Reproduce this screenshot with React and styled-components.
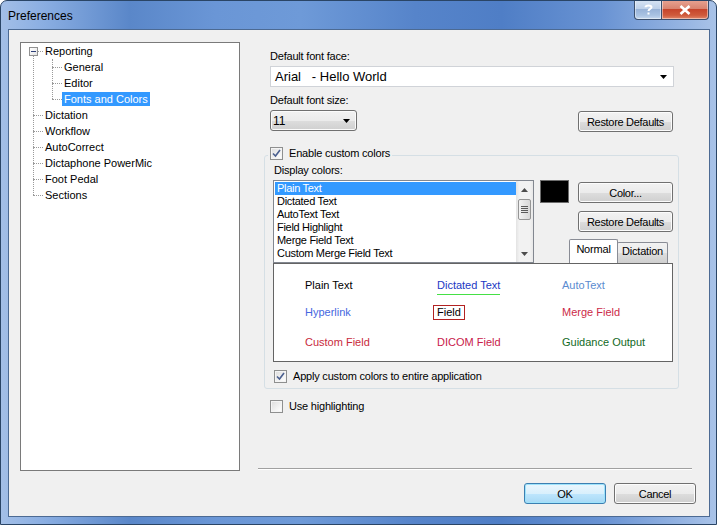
import styled, { createGlobalStyle } from "styled-components";

const GlobalStyle = createGlobalStyle`
    html, body {
        margin: 0;
        padding: 0;
        background: #ffffff;
    }
    body {
        font-family: "Liberation Sans", Arial, sans-serif;
        font-size: 11px;
        color: #000;
    }
`;

const Window = styled.div`
    width: 717px;
    height: 525px;
    box-sizing: border-box;
    display: flex;
    flex-direction: column;
    border: 1px solid #2a4566;
    border-radius: 7px 7px 0 0;
    background: linear-gradient(
        to right,
        #a3bfe7 0%,
        #8aaee2 6%,
        #5a87c9 18%,
        #6a96d6 30%,
        #6e9ad8 42%,
        #5684ca 58%,
        #4f7ec6 70%,
        #6993d3 84%,
        #98b6e3 96%,
        #a9c3e8 100%
    );
    overflow: hidden;
`;

const TitleBar = styled.div`
    height: 28px;
    display: flex;
    justify-content: space-between;
    align-items: flex-start;
    padding: 0 7px 0 7px;
`;

const Title = styled.div`
    font-size: 12px;
    line-height: 30px;
    color: #000;
`;

const CaptionButtons = styled.div`
    display: flex;
    margin-top: -1px;
`;

const CaptionButton = styled.div`
    width: ${(p) => p.$w}px;
    height: 20px;
    box-sizing: border-box;
    display: flex;
    align-items: center;
    justify-content: center;
    border: 1px solid #3b4f6d;
    border-top: none;
    border-radius: ${(p) => p.$radius};
    background: ${(p) =>
        p.$close
            ? "linear-gradient(to bottom, #e8a493 0%, #d98470 45%, #c6452c 50%, #cf5a3c 80%, #e0866a 100%)"
            : "linear-gradient(to bottom, #d7e4f4 0%, #bed1ea 45%, #98b3d8 50%, #a9c2e2 80%, #c6d8ee 100%)"};
    box-shadow: inset 0 0 0 1px rgba(255, 255, 255, 0.45);
    margin-left: ${(p) => (p.$close ? "-1px" : "0")};
`;

const Client = styled.div`
    flex: 1;
    margin: 0 6px 7px 7px;
    box-sizing: border-box;
    border: 1px solid #4c6a93;
    background: #f0f0f0;
    padding: 12px 0 0 11px;
    display: flex;
    flex-direction: column;
`;

const MainRow = styled.div`
    display: flex;
    gap: 18px;
    height: 429px;
`;

/* ---------- tree ---------- */

const TreeBox = styled.div`
    width: 220px;
    height: 429px;
    box-sizing: border-box;
    border: 1px solid #7a7a7a;
    background: #fff;
`;

const Branch = styled.div`
    position: relative;
    &::before {
        content: "";
        position: absolute;
        left: ${(p) => p.$line}px;
        top: ${(p) => p.$top}px;
        bottom: 8px;
        border-left: 1px dotted #9a9a9a;
    }
`;

const TreeRow = styled.div`
    position: relative;
    height: 16px;
    display: flex;
    align-items: center;
    padding-left: ${(p) => (p.$level ? 41 : 22)}px;
    &::before {
        content: "";
        position: absolute;
        left: ${(p) => (p.$level ? 31 : 12)}px;
        top: 8px;
        width: 10px;
        border-top: 1px dotted #9a9a9a;
    }
`;

const TreeLabel = styled.span`
    display: inline-block;
    line-height: 14px;
    padding: 0 2px;
    font-size: 11px;
    background: ${(p) => (p.$selected ? "#3399ff" : "transparent")};
    color: ${(p) => (p.$selected ? "#fff" : "#000")};
`;

const Expander = styled.span`
    position: absolute;
    left: 8px;
    top: 4px;
    width: 9px;
    height: 9px;
    box-sizing: border-box;
    border: 1px solid #919191;
    background: linear-gradient(135deg, #ffffff 0%, #e4e4e4 100%);
    z-index: 1;
    &::after {
        content: "";
        position: absolute;
        left: 1px;
        top: 3px;
        width: 5px;
        height: 1px;
        background: #2d3f78;
    }
`;

/* ---------- right side ---------- */

const RightCol = styled.div`
    width: 434px;
    display: flex;
    flex-direction: column;
`;

const Settings = styled.div`
    display: flex;
    flex-direction: column;
    padding-left: 6px;
`;

const FieldLabel = styled.div`
    margin: ${(p) => p.$top}px 0 0 ${(p) => p.$left || 6}px;
    line-height: 13px;
    font-size: 11px;
    letter-spacing: -0.2px;
`;

const ComboEdit = styled.div`
    margin: 3px 0 0 6px;
    width: 404px;
    height: 21px;
    box-sizing: border-box;
    border: 1px solid #d0d3d8;
    background: #fff;
    display: flex;
    align-items: center;
    justify-content: space-between;
    padding: 0 6px 0 4px;
    font-size: 13px;
    white-space: pre;
`;

const SizeRow = styled.div`
    margin: 3px 0 0 6px;
    width: 403px;
    display: flex;
    justify-content: space-between;
    align-items: flex-start;
`;

const ComboList = styled.div`
    width: 87px;
    height: 21px;
    box-sizing: border-box;
    border: 1px solid #707070;
    border-radius: 3px;
    background: linear-gradient(to bottom, #f2f2f2 0%, #ebebeb 50%, #dddddd 51%, #cfcfcf 100%);
    box-shadow: inset 0 0 0 1px #fbfbfb;
    display: flex;
    align-items: center;
    justify-content: space-between;
    padding: 0 6px 0 2px;
    font-size: 12px;
`;

const Button = styled.button`
    box-sizing: border-box;
    width: ${(p) => p.$w}px;
    height: 21px;
    margin: ${(p) => p.$margin || "0"};
    padding: 0;
    font-family: "Liberation Sans", Arial, sans-serif;
    font-size: 11px;
    letter-spacing: -0.3px;
    color: #000;
    border: 1px solid ${(p) => (p.$primary ? "#3c7fb1" : "#707070")};
    border-radius: 3px;
    background: ${(p) =>
        p.$primary
            ? "linear-gradient(to bottom, #eaf6fd 0%, #d9f0fc 50%, #bee6fd 51%, #a7d9f5 100%)"
            : "linear-gradient(to bottom, #f2f2f2 0%, #ebebeb 50%, #dddddd 51%, #cfcfcf 100%)"};
    box-shadow: inset 0 0 0 1px ${(p) => (p.$primary ? "#9ee3fb" : "#fcfcfc")};
`;

const Group = styled.fieldset`
    margin: 15px 0 0 0;
    width: 415px;
    min-width: 0;
    box-sizing: border-box;
    border: 1px solid #d5dfe5;
    border-radius: 3px;
    padding: 0 5px 5px 8px;
`;

const Legend = styled.legend`
    margin-left: -5px;
    padding: 0 2px 4px 2px;
`;

const CheckLabel = styled.label`
    display: inline-flex;
    align-items: center;
    gap: 6px;
    font-size: 11px;
    line-height: 13px;
    letter-spacing: -0.2px;
    margin: ${(p) => p.$margin || "0"};
`;

const CheckBox = styled.span`
    width: 13px;
    height: 13px;
    box-sizing: border-box;
    border: 1px solid #8e8f8f;
    background: linear-gradient(135deg, #dcdcdc 0%, #f6f6f6 70%, #ffffff 100%);
    box-shadow: inset 0 0 0 1px #f4f4f4;
    display: flex;
    align-items: center;
    justify-content: center;
    flex-shrink: 0;
`;

const ListRow = styled.div`
    margin-top: 3px;
    display: flex;
    gap: 6px;
    height: 83px;
`;

const ListBox = styled.div`
    width: 261px;
    height: 83px;
    box-sizing: border-box;
    border: 1px solid #828790;
    background: #fff;
    display: flex;
`;

const ListItems = styled.div`
    flex: 1;
    padding: 1px 0 0 1px;
    overflow: hidden;
`;

const ListItem = styled.div`
    height: 13px;
    line-height: 13px;
    padding-left: 2px;
    font-size: 11px;
    letter-spacing: -0.3px;
    white-space: nowrap;
    background: ${(p) => (p.$selected ? "#3399ff" : "transparent")};
    color: ${(p) => (p.$selected ? "#fff" : "#000")};
`;

const ScrollBar = styled.div`
    width: 17px;
    display: flex;
    flex-direction: column;
    background: linear-gradient(to right, #e3e3e3, #f2f2f2 20%, #f2f2f2 80%, #e8e8e8);
`;

const ScrollArrow = styled.div`
    height: 17px;
    display: flex;
    align-items: center;
    justify-content: center;
`;

const ScrollTrack = styled.div`
    flex: 1;
    padding: 1px 2px 0 2px;
`;

const Thumb = styled.div`
    height: 21px;
    box-sizing: border-box;
    border: 1px solid #959595;
    border-radius: 2px;
    background: linear-gradient(to right, #f3f3f3, #e4e4e4 50%, #d8d8d8);
    display: flex;
    align-items: center;
    justify-content: center;
`;

const Grip = styled.div`
    width: 7px;
    height: 7px;
    background: repeating-linear-gradient(
        to bottom,
        #5a5a5a 0px,
        #5a5a5a 1px,
        transparent 1px,
        transparent 2px
    );
`;

const ColorSide = styled.div`
    flex: 1;
    display: flex;
    flex-direction: column;
`;

const SwatchRow = styled.div`
    display: flex;
    gap: 9px;
`;

const Swatch = styled.div`
    width: 29px;
    height: 23px;
    box-sizing: border-box;
    background: ${(p) => p.$color};
    border: 1px solid #6d6d6d;
`;

const ButtonStack = styled.div`
    display: flex;
    flex-direction: column;
    gap: 8px;
    padding-top: 2px;
`;

const TabStrip = styled.div`
    margin-top: auto;
    margin-right: 5px;
    display: flex;
    justify-content: flex-end;
    align-items: flex-end;
`;

const Tab = styled.div`
    box-sizing: border-box;
    width: ${(p) => p.$w}px;
    height: ${(p) => (p.$active ? 24 : 21)}px;
    border: 1px solid #898c95;
    border-bottom: none;
    border-radius: 2px 2px 0 0;
    margin-left: ${(p) => (p.$active ? 0 : -1)}px;
    background: ${(p) =>
        p.$active
            ? "#ffffff"
            : "linear-gradient(to bottom, #f2f2f2 0%, #ebebeb 50%, #dddddd 51%, #cfcfcf 100%)"};
    position: relative;
    z-index: ${(p) => (p.$active ? 1 : 0)};
    text-align: center;
    font-size: 11px;
    letter-spacing: -0.2px;
    line-height: ${(p) => (p.$active ? 19 : 17)}px;
`;

const Preview = styled.div`
    height: 99px;
    box-sizing: border-box;
    border: 1px solid #646464;
    background: #fff;
    display: grid;
    grid-template-columns: 132px 125px 1fr;
    grid-template-rows: 27px 30px 13px;
    align-items: start;
    padding: 15px 0 0 31px;
    font-size: 11px;
`;

const Sample = styled.span`
    justify-self: start;
    align-self: start;
    line-height: 13px;
    color: ${(p) => p.$color};
`;

const Underlined = styled(Sample)`
    padding-bottom: 2px;
    border-bottom: 1px solid #45e045;
`;

const Boxed = styled(Sample)`
    margin: -1px 0 0 -4px;
    padding: 0 3px;
    border: 1px solid #b22222;
`;

const Separator = styled.div`
    margin-top: auto;
    margin-bottom: 1px;
    border-top: 1px solid #a0a0a0;
    border-bottom: 1px solid #ffffff;
`;

const ButtonRow = styled.div`
    display: flex;
    justify-content: flex-end;
    gap: 8px;
    margin: 12px 13px 0 0;
`;

function DownArrow({ color = "#000" }) {
    return (
        <svg width="7" height="4" viewBox="0 0 7 4">
            <polygon points="0,0 7,0 3.5,4" fill={color} />
        </svg>
    );
}

function Check({ checked }) {
    return (
        <CheckBox>
            {checked && (
                <svg width="9" height="9" viewBox="0 0 9 9">
                    <path
                        d="M1 4.5 L3.5 7 L8 1"
                        fill="none"
                        stroke="#4a5f8f"
                        strokeWidth="1.6"
                    />
                </svg>
            )}
        </CheckBox>
    );
}

const topItems = ["Dictation", "Workflow", "AutoCorrect", "Dictaphone PowerMic", "Foot Pedal", "Sections"];
const childItems = ["General", "Editor", "Fonts and Colors"];
const colorItems = [
    "Plain Text",
    "Dictated Text",
    "AutoText Text",
    "Field Highlight",
    "Merge Field Text",
    "Custom Merge Field Text",
];

export default function App() {
    return (
        <>
            <GlobalStyle />
            <Window>
                <TitleBar>
                    <Title>Preferences</Title>
                    <CaptionButtons>
                        <CaptionButton $w={28} $radius="0 0 0 4px">
                            <svg width="9" height="11" viewBox="0 0 9 11">
                                <path
                                    d="M1.5 3.2 C1.5 0.8 7.5 0.8 7.5 3.2 C7.5 5 4.5 5 4.5 7"
                                    fill="none"
                                    stroke="#ffffff"
                                    strokeWidth="2"
                                />
                                <rect x="3.5" y="8.5" width="2" height="2" fill="#ffffff" />
                            </svg>
                        </CaptionButton>
                        <CaptionButton $w={48} $close $radius="0 0 4px 0">
                            <svg width="12" height="10" viewBox="0 0 12 10">
                                <path
                                    d="M1.5 1 L10.5 9 M10.5 1 L1.5 9"
                                    stroke="#ffffff"
                                    strokeWidth="2.6"
                                />
                            </svg>
                        </CaptionButton>
                    </CaptionButtons>
                </TitleBar>
                <Client>
                    <MainRow>
                        <TreeBox>
                            <Branch $line={12} $top={8}>
                                <TreeRow>
                                    <Expander />
                                    <TreeLabel>Reporting</TreeLabel>
                                </TreeRow>
                                <Branch $line={31} $top={0}>
                                    {childItems.map((item) => (
                                        <TreeRow key={item} $level={1}>
                                            <TreeLabel $selected={item === "Fonts and Colors"}>
                                                {item}
                                            </TreeLabel>
                                        </TreeRow>
                                    ))}
                                </Branch>
                                {topItems.map((item) => (
                                    <TreeRow key={item}>
                                        <TreeLabel>{item}</TreeLabel>
                                    </TreeRow>
                                ))}
                            </Branch>
                        </TreeBox>
                        <RightCol>
                            <Settings>
                                <FieldLabel $top={8}>Default font face:</FieldLabel>
                                <ComboEdit>
                                    <span>Arial   - Hello World</span>
                                    <DownArrow />
                                </ComboEdit>
                                <FieldLabel $top={7}>Default font size:</FieldLabel>
                                <SizeRow>
                                    <ComboList>
                                        <span>11</span>
                                        <DownArrow />
                                    </ComboList>
                                    <Button $w={95} $margin="1px 0 0 0">
                                        Restore Defaults
                                    </Button>
                                </SizeRow>
                                <Group>
                                    <Legend>
                                        <CheckLabel>
                                            <Check checked />
                                            Enable custom colors
                                        </CheckLabel>
                                    </Legend>
                                    <FieldLabel $top={0} $left={1}>
                                        Display colors:
                                    </FieldLabel>
                                    <ListRow>
                                        <ListBox>
                                            <ListItems>
                                                {colorItems.map((item, i) => (
                                                    <ListItem key={item} $selected={i === 0}>
                                                        {item}
                                                    </ListItem>
                                                ))}
                                            </ListItems>
                                            <ScrollBar>
                                                <ScrollArrow>
                                                    <svg width="7" height="4" viewBox="0 0 7 4">
                                                        <polygon points="0,4 7,4 3.5,0" fill="#4d4d4d" />
                                                    </svg>
                                                </ScrollArrow>
                                                <ScrollTrack>
                                                    <Thumb>
                                                        <Grip />
                                                    </Thumb>
                                                </ScrollTrack>
                                                <ScrollArrow>
                                                    <DownArrow color="#4d4d4d" />
                                                </ScrollArrow>
                                            </ScrollBar>
                                        </ListBox>
                                        <ColorSide>
                                            <SwatchRow>
                                                <Swatch $color="#000000" />
                                                <ButtonStack>
                                                    <Button $w={95}>Color...</Button>
                                                    <Button $w={95}>Restore Defaults</Button>
                                                </ButtonStack>
                                            </SwatchRow>
                                            <TabStrip>
                                                <Tab $w={49} $active>
                                                    Normal
                                                </Tab>
                                                <Tab $w={51}>Dictation</Tab>
                                            </TabStrip>
                                        </ColorSide>
                                    </ListRow>
                                    <Preview>
                                        <Sample $color="#000000">Plain Text</Sample>
                                        <Underlined $color="#2138c4">Dictated Text</Underlined>
                                        <Sample $color="#5b8bd0">AutoText</Sample>
                                        <Sample $color="#4567e0">Hyperlink</Sample>
                                        <Boxed $color="#000000">Field</Boxed>
                                        <Sample $color="#cc2a48">Merge Field</Sample>
                                        <Sample $color="#c82a3c">Custom Field</Sample>
                                        <Sample $color="#c8204a">DICOM Field</Sample>
                                        <Sample $color="#12691e">Guidance Output</Sample>
                                    </Preview>
                                    <CheckLabel $margin="8px 0 0 1px">
                                        <Check checked />
                                        Apply custom colors to entire application
                                    </CheckLabel>
                                </Group>
                                <CheckLabel $margin="11px 0 0 6px">
                                    <Check />
                                    Use highlighting
                                </CheckLabel>
                            </Settings>
                            <Separator />
                        </RightCol>
                    </MainRow>
                    <ButtonRow>
                        <Button $w={82} $primary>
                            OK
                        </Button>
                        <Button $w={82}>Cancel</Button>
                    </ButtonRow>
                </Client>
            </Window>
        </>
    );
}
